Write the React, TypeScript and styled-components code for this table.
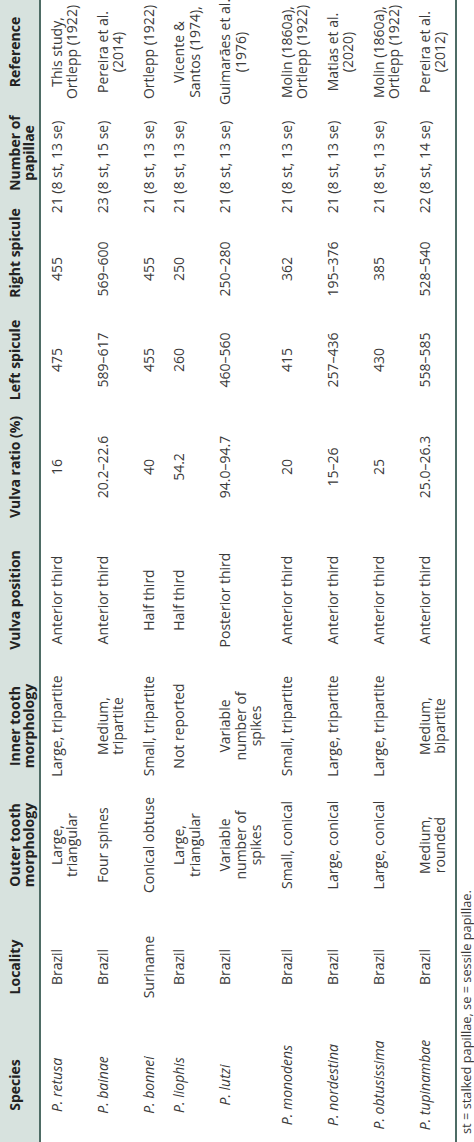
import styled, { createGlobalStyle } from "styled-components";
import { Fragment, ReactNode } from "react";

const GlobalStyle = createGlobalStyle`
  html, body {
    margin: 0;
    padding: 0;
    background: #fff;
  }
`;

// the table is drawn landscape and turned a quarter turn to the left
const Page = styled.div`
  width: 474px;
  height: 1142px;
  overflow: hidden;
  position: relative;
  background: #fff;
`;

const Sheet = styled.div`
  width: 1142px;
  height: 474px;
  transform-origin: 0 0;
  transform: translateY(1142px) rotate(-90deg);
  font-family: "Open Sans", "Noto Sans", sans-serif;
  color: #3a3a3a;
`;

const COLUMNS = "114px 122px 122px 116px 136px 130px 84px 130px 70px 132px";

const HeadRow = styled.div`
  display: grid;
  grid-template-columns: ${COLUMNS};
  height: 39px;
  background: #d7e2de;
  border-bottom: 2px solid #4e6c65;
`;

const HeadCell = styled.div`
  display: flex;
  flex-direction: column;
  align-items: center;
  padding-top: 8px;
  font-size: 14px;
  line-height: 14px;
  font-weight: 700;
  color: #222;
  text-align: center;
  white-space: nowrap;
`;

const Body = styled.div`
  border-bottom: 2px solid #4e6c65;
`;

const Row = styled.div`
  display: grid;
  grid-template-columns: ${COLUMNS};
  padding: 7.8px 0 7.2px;
`;

const Cell = styled.div<{ $italic?: boolean; $shift?: number }>`
  display: flex;
  flex-direction: column;
  align-items: center;
  padding-right: ${(p) => p.$shift ?? 0}px;
  font-size: 14px;
  line-height: 15.5px;
  font-style: ${(p) => (p.$italic ? "italic" : "normal")};
  text-align: center;
  white-space: nowrap;
`;

const Note = styled.div`
  padding: 3px 0 0 8px;
  font-size: 12.8px;
  line-height: 13px;
  color: #3a3a3a;
`;

const lines = (text: string): ReactNode => {
  const parts = text.split("|");
  return (
    <span>
      {parts.map((p, i) => (
        <Fragment key={i}>
          {i > 0 && <br />}
          {p}
        </Fragment>
      ))}
    </span>
  );
};

const headers = [
  "Species",
  "Locality",
  "Outer tooth|morphology",
  "Inner tooth|morphology",
  "Vulva position",
  "Vulva ratio (%)",
  "Left spicule",
  "Right spicule",
  "Number of|papillae",
  "Reference",
];

// right spicule and papillae values sit a little left of their headings
const shifts = [0, 0, 0, 0, 0, 0, 0, 32, 28, 0];

const rows: string[][] = [
  ["P. retusa", "Brazil", "Large,|triangular", "Large, tripartite", "Anterior third", "16", "475", "455", "21 (8 st, 13 se)", "This study,|Ortlepp (1922)"],
  ["P. bainae", "Brazil", "Four spines", "Medium,|tripartite", "Anterior third", "20.2–22.6", "589–617", "569–600", "23 (8 st, 15 se)", "Pereira et al.|(2014)"],
  ["P. bonnei", "Suriname", "Conical obtuse", "Small, tripartite", "Half third", "40", "455", "455", "21 (8 st, 13 se)", "Ortlepp (1922)"],
  ["P. liophis", "Brazil", "Large,|triangular", "Not reported", "Half third", "54.2", "260", "250", "21 (8 st, 13 se)", "Vicente &|Santos (1974),"],
  ["P. lutzi", "Brazil", "Variable|number of|spikes", "Variable|number of|spikes", "Posterior third", "94.0–94.7", "460–560", "250–280", "21 (8 st, 13 se)", "Guimarães et al.|(1976)"],
  ["P. monodens", "Brazil", "Small, conical", "Small, tripartite", "Anterior third", "20", "415", "362", "21 (8 st, 13 se)", "Molin (1860a),|Ortlepp (1922)"],
  ["P. nordestina", "Brazil", "Large, conical", "Large, tripartite", "Anterior third", "15–26", "257–436", "195–376", "21 (8 st, 13 se)", "Matias et al.|(2020)"],
  ["P. obtusissima", "Brazil", "Large, conical", "Large, tripartite", "Anterior third", "25", "430", "385", "21 (8 st, 13 se)", "Molin (1860a),|Ortlepp (1922)"],
  ["P. tupinambae", "Brazil", "Medium,|rounded", "Medium,|bipartite", "Anterior third", "25.0–26.3", "558–585", "528–540", "22 (8 st, 14 se)", "Pereira et al.|(2012)"],
];

const App = () => {
  return (
    <>
      <GlobalStyle />
      <Page>
        <Sheet>
          <HeadRow>
            {headers.map((h) => (
              <HeadCell key={h}>{lines(h)}</HeadCell>
            ))}
          </HeadRow>
          <Body>
            {rows.map((r) => (
              <Row key={r[0]}>
                {r.map((c, i) => (
                  <Cell key={i} $italic={i === 0} $shift={shifts[i]}>
                    {lines(c)}
                  </Cell>
                ))}
              </Row>
            ))}
          </Body>
          <Note>st = stalked papillae, se = sessile papillae.</Note>
        </Sheet>
      </Page>
    </>
  );
};

export default App;
